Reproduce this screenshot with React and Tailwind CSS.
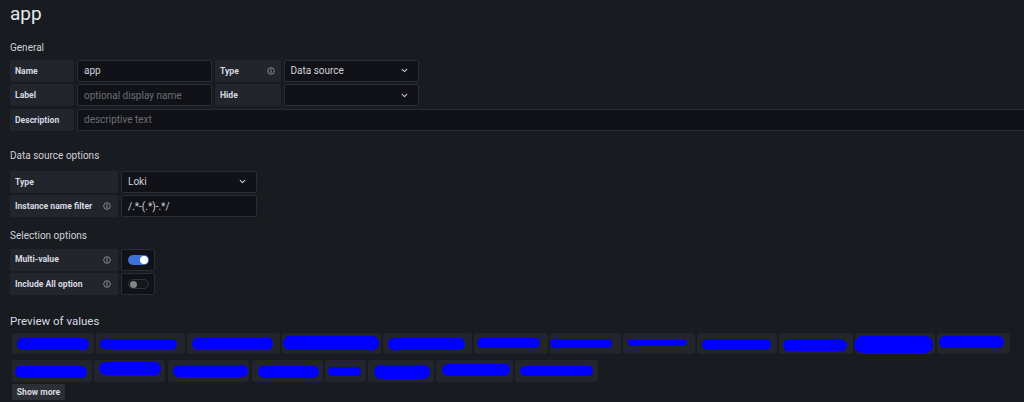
import React from "react";

const InfoIcon = () => (
  <svg width="8" height="8" viewBox="0 0 16 16" fill="none" className="text-[#9a9ba3] shrink-0">
    <circle cx="8" cy="8" r="6.6" stroke="currentColor" strokeWidth="1.7" />
    <line x1="8" y1="7.3" x2="8" y2="11.6" stroke="currentColor" strokeWidth="1.9" strokeLinecap="round" />
    <circle cx="8" cy="4.7" r="1.1" fill="currentColor" />
  </svg>
);

const Chevron = () => (
  <svg width="7" height="5" viewBox="0 0 7 5" fill="none" className="shrink-0">
    <path d="M1.2 1.3 L3.5 3.6 L5.8 1.3" stroke="#c7c8d2" strokeWidth="1.1" strokeLinecap="round" strokeLinejoin="round" />
  </svg>
);

const Label = ({ className, children, info }) => (
  <div
    className={
      "h-full bg-[#22252b] rounded-[2px] pl-[5px] flex items-center justify-between text-[8.6px] font-bold text-[#d8d9e2] shrink-0 " +
      className
    }
  >
    <span>{children}</span>
    {info ? <InfoIcon /> : null}
  </div>
);

const Input = ({ className, value, placeholder }) => (
  <div
    className={
      "h-full bg-[#111217] border border-[#2a2d33] rounded-[2px] pl-[6px] flex items-center text-[10px] shrink-0 " +
      className
    }
  >
    {value ? (
      <span className="text-[#d0d1da]">{value}</span>
    ) : (
      <span className="text-[#6c6e76]">{placeholder}</span>
    )}
  </div>
);

const Select = ({ className, value }) => (
  <div
    className={
      "h-full bg-[#111217] border border-[#2a2d33] rounded-[2px] pl-[6px] pr-[10px] flex items-center justify-between text-[10px] text-[#d0d1da] shrink-0 " +
      className
    }
  >
    <span>{value}</span>
    <Chevron />
  </div>
);

const Switch = ({ on }) => (
  <div className="h-full w-[34px] bg-[#111217] border border-[#2a2d33] rounded-[2px] flex items-center justify-center shrink-0">
    {on ? (
      <div className="w-[21px] h-[10px] rounded-full bg-[#3d71d9] flex items-center justify-end pr-[1px]">
        <div className="w-[8px] h-[8px] rounded-full bg-white" />
      </div>
    ) : (
      <div className="w-[21px] h-[10px] rounded-full border border-[#30333a] bg-[#15171b] flex items-center justify-start pl-[1px]">
        <div className="w-[7px] h-[7px] rounded-full bg-[#83848c]" />
      </div>
    )}
  </div>
);

// [chip width, blue offset x, blue width, blue offset y, blue height]
const chips = [
  [81.5, 5, 72, 5, 12],
  [88.5, 4, 77, 6, 10],
  [92.5, 5, 81, 5, 11],
  [98.5, 1, 96, 3, 14],
  [88.5, 5, 77, 5, 12],
  [73.5, 3, 63, 5, 10],
  [70.5, 0, 62, 6, 9],
  [71.5, 5, 59, 7, 6],
  [79.5, 5, 69, 6, 11],
  [73.5, 4, 64, 6, 12],
  [79.5, -1, 79, 3, 17],
  [73, 2, 65, 3, 12],
  [79.5, 3, 72, 6, 12],
  [71, 5, 62, 2, 13],
  [81.5, 5, 75, 5, 12],
  [71, 6, 61, 6, 12],
  [40.5, 3, 33, 7, 9],
  [65.5, 6, 56, 5, 14],
  [76.5, 6, 68, 4, 12],
  [83, 5, 73, 6, 10],
];

export default function App() {
  return (
    <div className="w-[1024px] h-[402px] overflow-hidden bg-[#181b1f] font-[family-name:Roboto,sans-serif] pl-[10px] flex flex-col">
      <div className="mt-[2px] h-[24px] leading-[24px] text-[19px] text-[#e6e7ee]">app</div>

      <div className="mt-[15.3px] h-[14px] leading-[14px] text-[10px] text-[#d0d1da]">General</div>

      <div className="mt-[4.7px] flex flex-col gap-[2.5px]">
        <div className="h-[22px] flex gap-[3px]">
          <Label className="w-[64px]">Name</Label>
          <Input className="w-[135px]" value="app" />
          <Label className="w-[65.5px] pr-[6px]" info>
            Type
          </Label>
          <Select className="w-[135px]" value="Data source" />
        </div>
        <div className="h-[22px] flex gap-[3px]">
          <Label className="w-[64px]">Label</Label>
          <Input className="w-[135px]" placeholder="optional display name" />
          <Label className="w-[65.5px]">Hide</Label>
          <Select className="w-[135px]" value="" />
        </div>
        <div className="h-[22px] flex gap-[3px]">
          <Label className="w-[64px]">Description</Label>
          <Input className="w-[960px]" placeholder="descriptive text" />
        </div>
      </div>

      <div className="mt-[17.6px] h-[14px] leading-[14px] text-[10px] text-[#d0d1da]">Data source options</div>

      <div className="mt-[8.4px] flex flex-col gap-[2.5px]">
        <div className="h-[22px] flex gap-[3px]">
          <Label className="w-[108px]">Type</Label>
          <Select className="w-[136px] pr-[9px]" value="Loki" />
        </div>
        <div className="h-[22px] flex gap-[3px]">
          <Label className="w-[108px] pr-[7px]" info>
            Instance name filter
          </Label>
          <Input className="w-[136px]" value="/.*-(.*)-.*/" />
        </div>
      </div>

      <div className="mt-[11.1px] h-[14px] leading-[14px] text-[10px] text-[#d0d1da]">Selection options</div>

      <div className="mt-[6.1px] flex flex-col gap-[2.5px]">
        <div className="h-[22px] flex gap-[3px]">
          <Label className="w-[108px] pr-[7px]" info>
            Multi-value
          </Label>
          <Switch on />
        </div>
        <div className="h-[22px] flex gap-[3px]">
          <Label className="w-[108px] pr-[7px]" info>
            Include All option
          </Label>
          <Switch />
        </div>
      </div>

      <div className="mt-[17.6px] h-[16px] leading-[16px] text-[11.5px] text-[#d8d9e2]">Preview of values</div>

      <div className="mt-[3.9px] pl-[2px] pr-[10px] flex flex-wrap gap-x-[2.5px] gap-y-[5.7px]">
        {chips.map(([w, bx, bw, by, bh], i) => (
          <div
            key={i}
            className="h-[21.6px] bg-[#22252b] rounded-[3px] flex items-start overflow-visible"
            style={{ width: w }}
          >
            <div
              className="bg-[#0000ff] rounded-full"
              style={{ marginLeft: bx, marginTop: by, width: bw, height: bh }}
            />
          </div>
        ))}
      </div>

      <div className="mt-[2.4px] ml-[2px] w-[53px] h-[16.5px] bg-[#2c2f35] rounded-[2px] flex items-center justify-center text-[8.6px] font-bold text-[#d8d9e2]">
        Show more
      </div>
    </div>
  );
}
